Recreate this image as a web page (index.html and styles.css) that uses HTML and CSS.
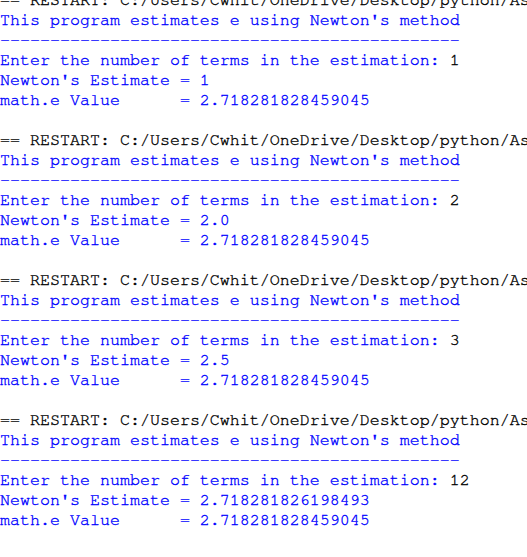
FILE: index.html
```html
<!DOCTYPE html>
<html>
<head>
<meta charset="utf-8">
<link rel="stylesheet" href="styles.css">
</head>
<body>
<div class="shell">
<div class="line sys">== RESTART: C:/Users/Cwhit/OneDrive/Desktop/python/Assignment_estimate_e.py ==</div>
<div class="line out">This program estimates e using Newton's method</div>
<div class="line out">----------------------------------------------</div>
<div class="line out">Enter the number of terms in the estimation: <span class="in">1</span></div>
<div class="line out">Newton's Estimate = 1</div>
<div class="line out">math.e Value      = 2.718281828459045</div>
<div class="line out"> </div>
<div class="line sys">== RESTART: C:/Users/Cwhit/OneDrive/Desktop/python/Assignment_estimate_e.py ==</div>
<div class="line out">This program estimates e using Newton's method</div>
<div class="line out">----------------------------------------------</div>
<div class="line out">Enter the number of terms in the estimation: <span class="in">2</span></div>
<div class="line out">Newton's Estimate = 2.0</div>
<div class="line out">math.e Value      = 2.718281828459045</div>
<div class="line out"> </div>
<div class="line sys">== RESTART: C:/Users/Cwhit/OneDrive/Desktop/python/Assignment_estimate_e.py ==</div>
<div class="line out">This program estimates e using Newton's method</div>
<div class="line out">----------------------------------------------</div>
<div class="line out">Enter the number of terms in the estimation: <span class="in">3</span></div>
<div class="line out">Newton's Estimate = 2.5</div>
<div class="line out">math.e Value      = 2.718281828459045</div>
<div class="line out"> </div>
<div class="line sys">== RESTART: C:/Users/Cwhit/OneDrive/Desktop/python/Assignment_estimate_e.py ==</div>
<div class="line out">This program estimates e using Newton's method</div>
<div class="line out">----------------------------------------------</div>
<div class="line out">Enter the number of terms in the estimation: <span class="in">12</span></div>
<div class="line out">Newton's Estimate = 2.718281826198493</div>
<div class="line out">math.e Value      = 2.718281828459045</div>
</div>
</body>
</html>
```
FILE: styles.css
```css
html, body {
  margin: 0;
  padding: 0;
  background: #ffffff;
  overflow: hidden;
}
.shell {
  margin-top: -10px;
  font-family: "Nimbus Mono PS", "Nimbus Mono L", "FreeMono", "Liberation Mono", monospace;
  font-size: 16.667px;
  line-height: 20px;
  -webkit-text-stroke: 0.35px;
}
.line {
  white-space: pre;
  height: 20px;
}
.out {
  color: #0000ff;
}
.sys {
  color: #000000;
}
.in {
  color: #000000;
}
```
